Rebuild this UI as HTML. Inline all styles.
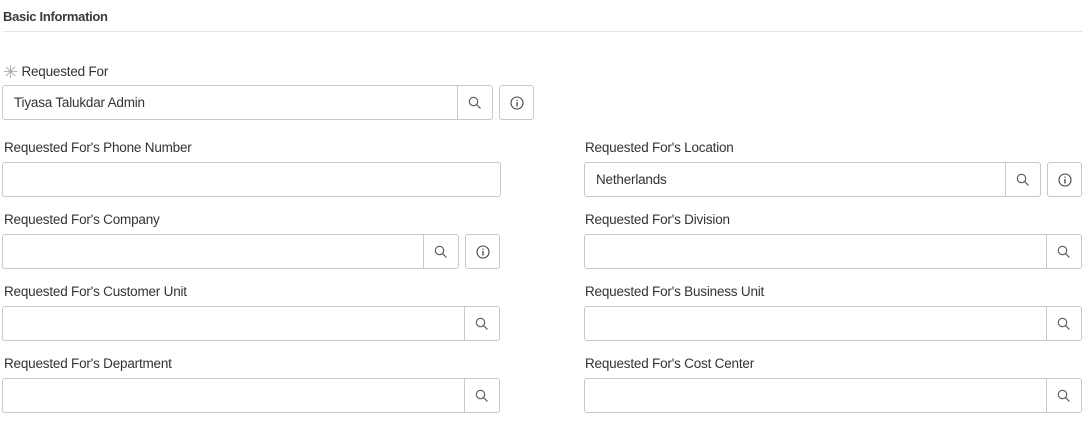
<!DOCTYPE html>
<html><head><meta charset="utf-8"><style>
body{margin:0;width:1087px;height:422px;background:#fff;font-family:"Liberation Sans",sans-serif;color:#2e2e2e;position:relative;overflow:hidden}
.a{position:absolute}
.t{font-size:13px;font-weight:bold;color:#3a3a3a;left:3px;top:9px;letter-spacing:-0.3px}
.hr{left:3px;top:31px;width:1079px;height:1px;background:#e4e4e4}
.l{font-size:13.5px;letter-spacing:-0.2px;color:#333}
.in{border:1px solid #c8c8c8;border-radius:3px;box-sizing:border-box;height:35px;background:#fff;font-size:13.5px;padding-left:11px;line-height:33px;color:#333;letter-spacing:-0.2px}
.sb{border-left:1px solid #c8c8c8;position:absolute;right:0;top:0;width:34px;height:33px}
.ib{border:1px solid #c8c8c8;border-radius:3px;box-sizing:border-box;width:35px;height:35px}
svg{position:absolute;left:50%;top:50%;transform:translate(-50%,-50%)}
</style></head><body>
<div class="a t">Basic Information</div>
<div class="a hr"></div>

<div class="a l" style="left:3px;top:60px"><span style="color:#aaa;font-size:18px;position:relative;top:2px">✳</span> Requested For</div>
<div class="a in" style="left:2px;top:85px;width:491px">Tiyasa Talukdar Admin<div class="sb"><svg width="14" height="14" viewBox="0 0 14 14"><circle cx="5.5" cy="5.5" r="4.2" fill="none" stroke="#555" stroke-width="1.1"/><path d="M8.5 8.5L12.5 12.5" stroke="#555" stroke-width="1.2"/></svg></div></div>
<div class="a ib" style="left:499px;top:85px"><svg width="14" height="14" viewBox="0 0 14 14"><circle cx="7" cy="7" r="6" fill="none" stroke="#444" stroke-width="1.1"/><path d="M7 6v4.5M7 3.6v1.2" stroke="#444" stroke-width="1.3"/></svg></div>

<div class="a l" style="left:4px;top:140px">Requested For's Phone Number</div>
<div class="a in" style="left:2px;top:162px;width:499px"></div>
<div class="a l" style="left:585px;top:140px">Requested For's Location</div>
<div class="a in" style="left:584px;top:162px;width:457px">Netherlands<div class="sb"><svg width="14" height="14" viewBox="0 0 14 14"><circle cx="5.5" cy="5.5" r="4.2" fill="none" stroke="#555" stroke-width="1.1"/><path d="M8.5 8.5L12.5 12.5" stroke="#555" stroke-width="1.2"/></svg></div></div>
<div class="a ib" style="left:1047px;top:162px"><svg width="14" height="14" viewBox="0 0 14 14"><circle cx="7" cy="7" r="6" fill="none" stroke="#444" stroke-width="1.1"/><path d="M7 6v4.5M7 3.6v1.2" stroke="#444" stroke-width="1.3"/></svg></div>

<div class="a l" style="left:4px;top:212px">Requested For's Company</div>
<div class="a in" style="left:2px;top:234px;width:457px"><div class="sb"><svg width="14" height="14" viewBox="0 0 14 14"><circle cx="5.5" cy="5.5" r="4.2" fill="none" stroke="#555" stroke-width="1.1"/><path d="M8.5 8.5L12.5 12.5" stroke="#555" stroke-width="1.2"/></svg></div></div>
<div class="a ib" style="left:465px;top:234px"><svg width="14" height="14" viewBox="0 0 14 14"><circle cx="7" cy="7" r="6" fill="none" stroke="#444" stroke-width="1.1"/><path d="M7 6v4.5M7 3.6v1.2" stroke="#444" stroke-width="1.3"/></svg></div>
<div class="a l" style="left:585px;top:212px">Requested For's Division</div>
<div class="a in" style="left:584px;top:234px;width:498px"><div class="sb"><svg width="14" height="14" viewBox="0 0 14 14"><circle cx="5.5" cy="5.5" r="4.2" fill="none" stroke="#555" stroke-width="1.1"/><path d="M8.5 8.5L12.5 12.5" stroke="#555" stroke-width="1.2"/></svg></div></div>

<div class="a l" style="left:4px;top:284px">Requested For's Customer Unit</div>
<div class="a in" style="left:2px;top:306px;width:498px"><div class="sb"><svg width="14" height="14" viewBox="0 0 14 14"><circle cx="5.5" cy="5.5" r="4.2" fill="none" stroke="#555" stroke-width="1.1"/><path d="M8.5 8.5L12.5 12.5" stroke="#555" stroke-width="1.2"/></svg></div></div>
<div class="a l" style="left:585px;top:284px">Requested For's Business Unit</div>
<div class="a in" style="left:584px;top:306px;width:498px"><div class="sb"><svg width="14" height="14" viewBox="0 0 14 14"><circle cx="5.5" cy="5.5" r="4.2" fill="none" stroke="#555" stroke-width="1.1"/><path d="M8.5 8.5L12.5 12.5" stroke="#555" stroke-width="1.2"/></svg></div></div>

<div class="a l" style="left:4px;top:356px">Requested For's Department</div>
<div class="a in" style="left:2px;top:378px;width:498px"><div class="sb"><svg width="14" height="14" viewBox="0 0 14 14"><circle cx="5.5" cy="5.5" r="4.2" fill="none" stroke="#555" stroke-width="1.1"/><path d="M8.5 8.5L12.5 12.5" stroke="#555" stroke-width="1.2"/></svg></div></div>
<div class="a l" style="left:585px;top:356px">Requested For's Cost Center</div>
<div class="a in" style="left:584px;top:378px;width:498px"><div class="sb"><svg width="14" height="14" viewBox="0 0 14 14"><circle cx="5.5" cy="5.5" r="4.2" fill="none" stroke="#555" stroke-width="1.1"/><path d="M8.5 8.5L12.5 12.5" stroke="#555" stroke-width="1.2"/></svg></div></div>
</body></html>
